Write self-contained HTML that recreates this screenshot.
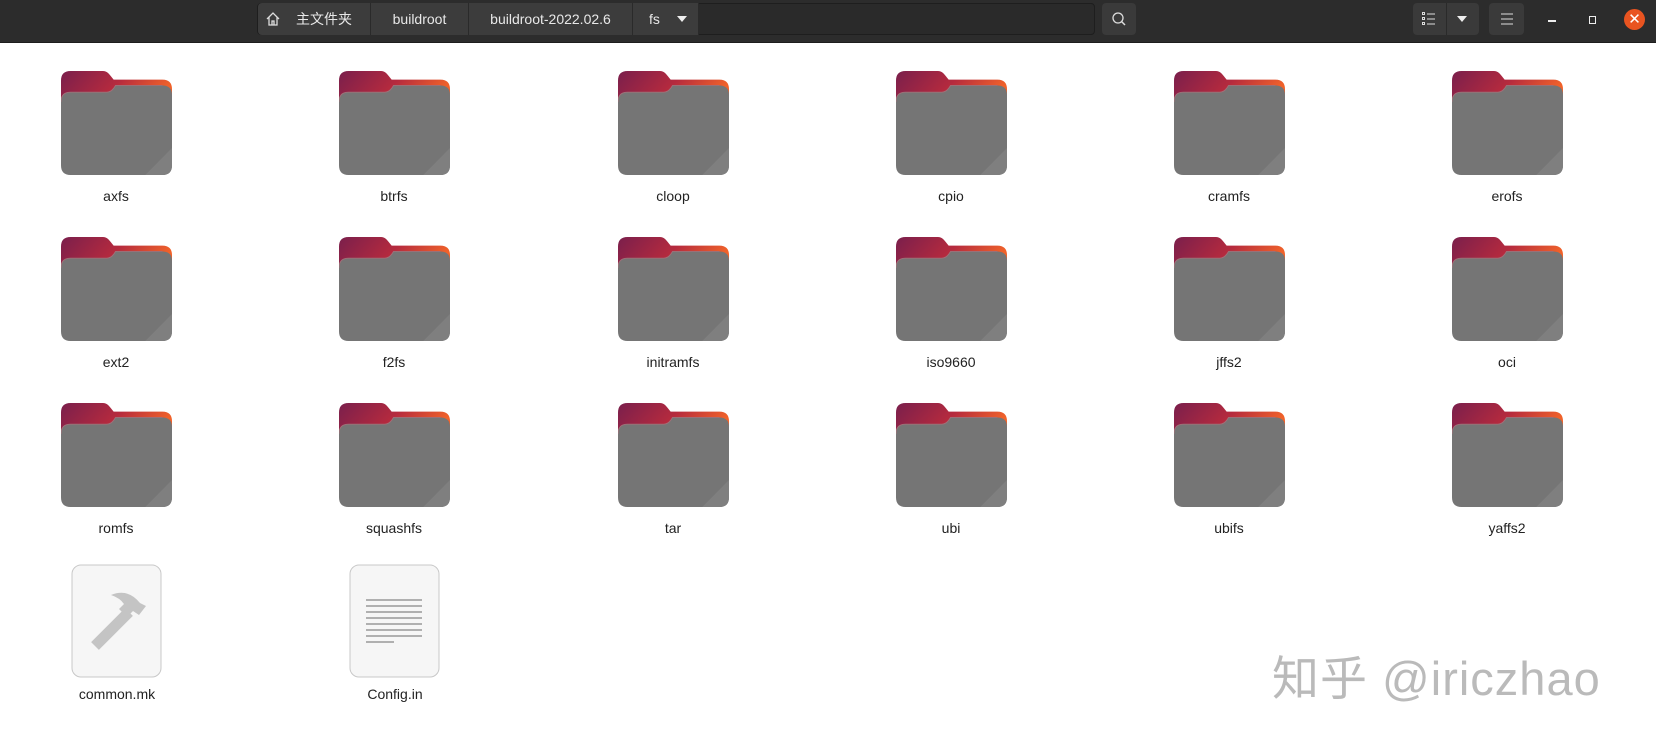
<!DOCTYPE html>
<html><head><meta charset="utf-8"><style>
body{margin:0;width:1656px;height:738px;background:#fff;overflow:hidden;font-family:"Liberation Sans","Noto Sans CJK SC",sans-serif;position:relative}
.hdr{position:absolute;left:0;top:0;width:1656px;height:42px;background:#2c2c2c;border-bottom:1px solid #1d1d1d}
.bc{position:absolute;top:3px;height:32px;left:257px;width:838px;background:#2a2a2a;border:1px solid #1e1e1e;border-radius:4px;box-sizing:border-box}
.seg{position:absolute;top:3px;height:32px;background:#3c3c3c;color:#e8e8e8;font-size:14px;line-height:32px;text-align:center;border-right:1px solid #2a2a2a;box-sizing:border-box}
.btn{position:absolute;top:3px;height:32px;background:#3a3a3a;border-radius:4px}
.item{position:absolute;width:200px;text-align:center;font-size:14px;color:#222}
.item svg{display:block;margin:0 auto}
.wm{position:absolute;left:1272px;top:640px;font-size:47px;color:#bababa;letter-spacing:1px;text-shadow:1px 1px 0 #fff}
</style></head><body>
<div class="hdr">
<div class="bc"></div>
<div class="seg" style="left:258px;width:113px;text-align:left;padding-left:38px;border-radius:4px 0 0 4px">主文件夹</div>
<svg style="position:absolute;left:265px;top:11px" width="16" height="16" viewBox="0 0 16 16"><path d="M2 8 L8 2 L14 8 M4 6 V14 H12 V6 M7 14 V10 H9 V14" fill="none" stroke="#ddd" stroke-width="1.3"/></svg>
<div class="seg" style="left:371px;width:98px">buildroot</div>
<div class="seg" style="left:469px;width:164px">buildroot-2022.02.6</div>
<div class="seg" style="left:633px;width:66px;text-align:left;padding-left:16px">fs</div>
<svg style="position:absolute;left:677px;top:16px" width="10" height="6"><path d="M0 0H10L5 6Z" fill="#eee"/></svg>
<div class="btn" style="left:1102px;width:34px"></div>
<svg style="position:absolute;left:1111px;top:11px" width="16" height="16"><circle cx="7" cy="7" r="5" fill="none" stroke="#ddd" stroke-width="1.3"/><path d="M10.5 10.5L14 14" stroke="#ddd" stroke-width="1.5"/></svg>
<div class="btn" style="left:1413px;width:66px"></div>
<div style="position:absolute;left:1446px;top:3px;width:1px;height:32px;background:#2a2a2a"></div>
<svg style="position:absolute;left:1422px;top:12px" width="14" height="14"><g fill="none" stroke="#ddd"><rect x="0.5" y="0.5" width="2" height="2"/><rect x="0.5" y="5.5" width="2" height="2"/><rect x="0.5" y="10.5" width="2" height="2"/><path d="M5 2H13M5 7H13M5 12H13"/></g></svg>
<svg style="position:absolute;left:1457px;top:16px" width="10" height="6"><path d="M0 0H10L5 6Z" fill="#eee"/></svg>
<div class="btn" style="left:1489px;width:35px"></div>
<svg style="position:absolute;left:1500px;top:12px" width="14" height="14"><path d="M1 2H13M1 7H13M1 12H13" stroke="#ddd"/></svg>
<div style="position:absolute;left:1548px;top:20px;width:8px;height:1.5px;background:#eee"></div>
<div style="position:absolute;left:1589px;top:16px;width:5px;height:6px;border:1.5px solid #eee"></div>
<div style="position:absolute;left:1624px;top:9px;width:21px;height:21px;border-radius:50%;background:#e95420;color:#fff;font-size:15px;line-height:21px;text-align:center">✕</div>
</div>

<svg width="0" height="0" style="position:absolute"><defs>
<linearGradient id="g" x1="0" y1="0" x2="1" y2="0.3"><stop offset="0" stop-color="#7a1f4c"/><stop offset="0.55" stop-color="#b52a3e"/><stop offset="1" stop-color="#f0622a"/></linearGradient>
<symbol id="f" viewBox="0 0 116 108" preserveAspectRatio="none"><path d="M0 10 Q0 0 10 0 H44 Q48 0 51 4 L55 9 H106 Q116 9 116 19 V40 H0Z" fill="url(#g)"/><path d="M0 32 Q0 22 10 22 H48 Q52 22 55 18 L57 15 H106 Q116 15 116 25 V98 Q116 108 106 108 H10 Q0 108 0 98Z" fill="#757575"/><path d="M116 80 V98 Q116 108 106 108 H88Z" fill="#7f7f7f"/><path d="M0 32 Q0 22 10 22 H48 Q52 22 55 18 L57 15 H106" fill="none" stroke="#a07078" stroke-width="1"/></symbol>
</defs></svg>

<div id="grid"></div>
<script>
var names=["axfs","btrfs","cloop","cpio","cramfs","erofs","ext2","f2fs","initramfs","iso9660","jffs2","oci","romfs","squashfs","tar","ubi","ubifs","yaffs2"];
var cx=[116,394,673,951,1229,1507],h="";
names.forEach(function(n,i){var c=i%6,r=Math.floor(i/6);
h+='<div class="item" style="left:'+(cx[c]-100)+'px;top:'+(71+r*166)+'px"><svg width="111" height="104"><use href="#f" width="111" height="104"/></svg><div style="margin-top:13px">'+n+'</div></div>';});
document.getElementById('grid').innerHTML=h;
</script>

<div class="item" style="left:17px;top:564px">
<svg width="92" height="114" viewBox="0 0 92 114"><rect x="1" y="1" width="89" height="112" rx="9" fill="#f6f6f6" stroke="#c8c8c8"/><path d="M24 82 L58 48" stroke="#c4c4c4" stroke-width="11"/><path d="M40 31 Q57 24 69 39 L75 42 L68 51 L62 47 L56 53 L48 45 L53 40 Q49 34 40 31Z" fill="#c4c4c4"/></svg>
<div style="margin-top:8px">common.mk</div></div>
<div class="item" style="left:295px;top:564px">
<svg width="92" height="114" viewBox="0 0 92 114"><rect x="1" y="1" width="89" height="112" rx="9" fill="#f6f6f6" stroke="#c8c8c8"/><g stroke="#999" stroke-width="1.5"><path d="M17 36H73M17 42H73M17 48H73M17 54H73M17 60H73M17 66H73M17 72H73M17 78H45"/></g></svg>
<div style="margin-top:8px">Config.in</div></div>

<div class="wm">知乎 @iriczhao</div>
</body></html>
